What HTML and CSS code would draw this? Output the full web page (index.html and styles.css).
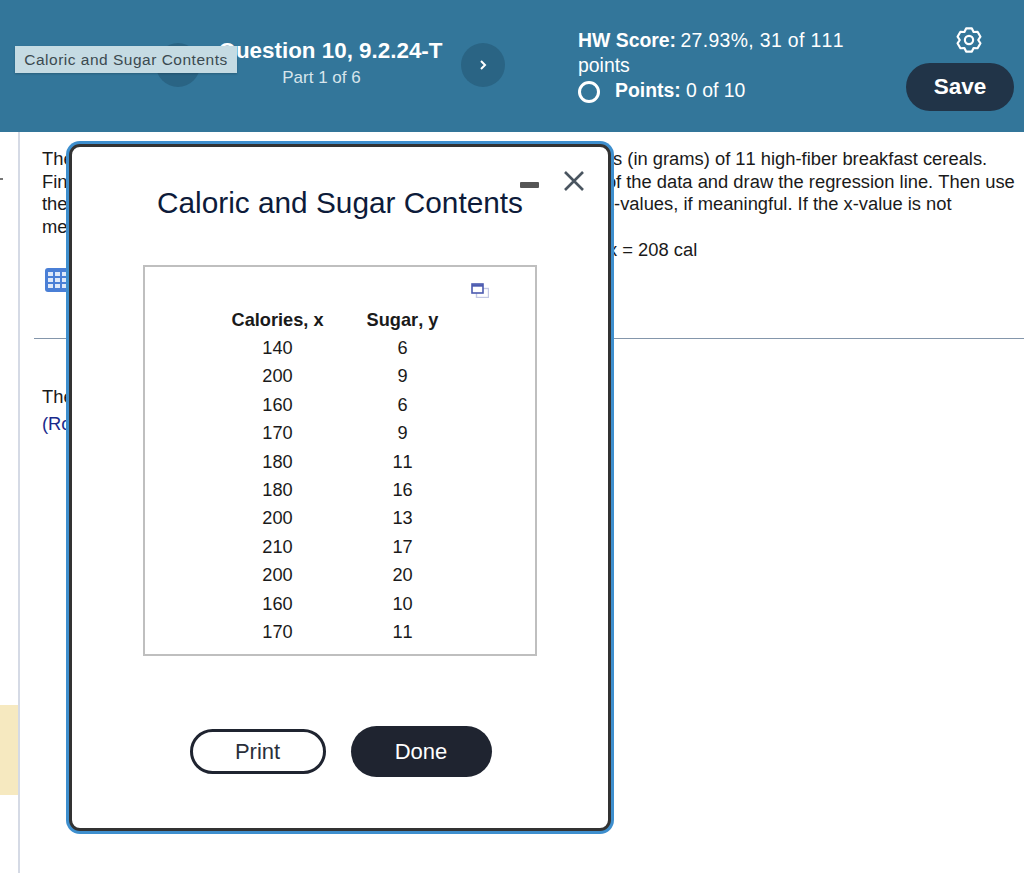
FILE: index.html
```html
<!DOCTYPE html>
<html lang="en">
<head>
    <meta charset="UTF-8">
    <meta name="viewport" content="width=device-width, initial-scale=1.0">
    <title>Question 10, 9.2.24-T</title>
    <link rel="stylesheet" href="styles.css">
</head>
<body>
    <header class="top-bar">
        <div class="nav-group">
            <button class="nav-btn nav-prev"></button>
            <div class="question-title">
                <h1>Question 10, 9.2.24-T</h1>
                <div class="part">Part 1 of 6</div>
            </div>
            <button class="nav-btn">
                <svg width="10" height="14" viewBox="0 0 10 14"><path d="M3 3l4 4-4 4" fill="none" stroke="#fff" stroke-width="2"/></svg>
            </button>
        </div>
        <div class="score">
            <div class="score-line"><b>HW Score:</b> <span class="score-value">27.93%, 31 of 111</span> points</div>
            <div class="points-line">
                <span class="radio"></span>
                <span><b>Points:</b> 0 of 10</span>
            </div>
        </div>
        <div class="actions">
            <svg class="gear" width="26" height="26" viewBox="0 0 24 24" fill="none" stroke="#fff" stroke-width="2" stroke-linejoin="round">
                <path d="M9.34 1.33H14.66L16.25 4.64 19.91 4.36 22.57 8.97 20.5 12 22.57 15.03 19.91 19.64 16.25 19.36 14.66 22.67H9.34L7.75 19.36 4.09 19.64 1.43 15.03 3.5 12 1.43 8.97 4.09 4.36 7.75 4.64z"/>
                <circle cx="12" cy="12" r="3.8"/>
            </svg>
            <button class="save-btn">Save</button>
        </div>
    </header>
    <div class="tooltip">Caloric and Sugar Contents</div>

    <div class="page">
        <div class="rail">
            <span class="rail-dot"></span>
            <span class="rail-flag"></span>
        </div>
        <main class="content">
            <p class="intro">
                The data shows the caloric content (in calories), and the sugar contents (in grams) of 11 high-fiber breakfast cereals.<br>
                Find the equation of the regression line. Then construct a scatter plot of the data and draw the regression line. Then use<br>
                the regression equation to predict the value of y for each of the given x-values, if meaningful. If the x-value is not<br>
                meaningful to predict the value of y, explain why not.
            </p>
            <p class="given">x = 208 cal</p>
            <svg class="data-icon" width="24" height="24" viewBox="0 0 24 24">
                <rect width="24" height="24" rx="3" fill="#4a7fd6"/>
                <path d="M3 4h5v4H3zM10 4h5v4h-5zM17 4h5v4h-5zM3 10h5v4H3zM10 10h5v4h-5zM17 10h5v4h-5zM3 16h5v4H3zM10 16h5v4h-5zM17 16h5v4h-5z" fill="#dfe9f9"/>
            </svg>
            <hr class="divider">
            <p class="answer">The equation of the regression line is</p>
            <p class="hint">(Round to three decimal places as needed.)</p>
        </main>
    </div>

    <div class="modal">
        <div class="window-btns">
            <span class="minimize"></span>
            <svg width="22" height="22" viewBox="0 0 22 22"><path d="M2 2l18 18M20 2L2 20" stroke="#4a5560" stroke-width="2.6"/></svg>
        </div>
        <h2 class="modal-title">Caloric and Sugar Contents</h2>
        <div class="table-box">
            <svg class="copy-icon" width="18" height="15" viewBox="0 0 18 15" fill="none">
                <rect x="5.5" y="5.5" width="12" height="9" stroke="#c3c8e4" stroke-width="1.4"/>
                <rect x="1" y="1" width="11" height="9" fill="#fff" stroke="#4c5bb0" stroke-width="1.6"/>
                <path d="M1 2.5h11" stroke="#4c5bb0" stroke-width="2.4"/>
            </svg>
            <table>
                <thead>
                    <tr><th>Calories, x</th><th>Sugar, y</th></tr>
                </thead>
                <tbody>
                    <tr><td>140</td><td>6</td></tr>
                    <tr><td>200</td><td>9</td></tr>
                    <tr><td>160</td><td>6</td></tr>
                    <tr><td>170</td><td>9</td></tr>
                    <tr><td>180</td><td>11</td></tr>
                    <tr><td>180</td><td>16</td></tr>
                    <tr><td>200</td><td>13</td></tr>
                    <tr><td>210</td><td>17</td></tr>
                    <tr><td>200</td><td>20</td></tr>
                    <tr><td>160</td><td>10</td></tr>
                    <tr><td>170</td><td>11</td></tr>
                </tbody>
            </table>
        </div>
        <div class="modal-actions">
            <button class="print-btn">Print</button>
            <button class="done-btn">Done</button>
        </div>
    </div>
</body>
</html>
```

FILE: styles.css
```css
body {
    margin: 0;
    height: 873px;
    overflow: hidden;
    font-family: "Liberation Sans", Arial, sans-serif;
    font-kerning: none;
    color: #1a1a1a;
    background-color: white;
}
button {
    font-family: inherit;
    border: none;
    padding: 0;
}
.top-bar {
    display: flex;
    height: 132px;
    box-sizing: border-box;
    background-color: #33769a;
    color: white;
}
.nav-group {
    display: flex;
    align-items: center;
    gap: 18px;
    margin-left: 156px;
    width: 422px;
    height: 130px;
}
.nav-btn {
    display: flex;
    align-items: center;
    justify-content: center;
    flex: none;
    width: 44px;
    height: 44px;
    border-radius: 50%;
    background-color: #2a6484;
}
.question-title {
    width: 225px;
    margin-bottom: 4px;
    text-align: center;
}
.question-title h1 {
    margin: 0;
    font-size: 22.4px;
    line-height: 26px;
    white-space: nowrap;
}
.part {
    margin-top: 4px;
    padding-right: 18px;
    font-size: 17px;
    line-height: 20px;
    color: #d7e5ec;
}
.score {
    width: 290px;
    padding-top: 28px;
    font-size: 19.4px;
    line-height: 25px;
}
.score-line {
    width: 280px;
}
.score-value {
    margin-left: -1px;
    letter-spacing: 0.35px;
}
.points-line {
    display: flex;
    align-items: center;
    gap: 15px;
}
.radio {
    width: 16px;
    height: 16px;
    border: 3px solid white;
    border-radius: 50%;
    margin-top: 3px;
}
.actions {
    display: flex;
    flex-direction: column;
    align-items: center;
    margin-left: 38px;
    padding-top: 27px;
}
.gear {
    display: block;
    margin-left: 18px;
}
.save-btn {
    width: 108px;
    height: 48px;
    margin-top: 10px;
    border-radius: 24px;
    background-color: #213448;
    color: white;
    font-size: 22.5px;
    font-weight: bold;
}
.tooltip {
    position: absolute;
    left: 15px;
    top: 46px;
    width: 222px;
    height: 27px;
    box-sizing: border-box;
    background-color: #c5dbe3;
    color: #3b4a50;
    font-size: 15.5px;
    line-height: 27px;
    letter-spacing: 0.5px;
    text-align: center;
    box-shadow: 0 1px 2px rgba(0,0,0,0.2);
}
.page {
    display: flex;
    height: 741px;
}
.rail {
    position: relative;
    width: 18px;
    flex: none;
    border-right: 2px solid #d5dae5;
}
.rail-dot {
    position: absolute;
    left: 0;
    top: 46px;
    width: 3px;
    height: 2px;
    background-color: #777;
}
.rail-flag {
    position: absolute;
    left: 0;
    top: 573px;
    width: 18px;
    height: 90px;
    background-color: #f6e9c0;
}
.content {
    flex: 1;
    padding-top: 16px;
    font-size: 18.35px;
    line-height: 22.7px;
    white-space: nowrap;
    overflow: hidden;
}
.intro {
    margin: 0 0 0 22px;
}
.given {
    margin: 0 0 0 588px;
}
.data-icon {
    display: block;
    margin: 6px 0 0 25px;
}
.divider {
    height: 1px;
    margin: 46px 0 0 14px;
    border: none;
    background-color: #8496ab;
}
.answer {
    margin: 47px 0 0 22px;
}
.hint {
    margin: 5px 0 0 22px;
    color: #1a2a8c;
}
.modal {
    position: absolute;
    left: 69px;
    top: 144px;
    width: 542px;
    height: 687px;
    box-sizing: border-box;
    padding-top: 38px;
    background-color: white;
    border: 3px solid #333;
    border-radius: 11px;
    box-shadow: 0 0 0 3px #3e8fce;
}
.window-btns {
    position: absolute;
    right: 23px;
    top: 23px;
    display: flex;
    align-items: center;
    gap: 24px;
}
.minimize {
    width: 19px;
    height: 6px;
    margin-top: 8px;
    border-radius: 1px;
    background-color: #555;
}
.modal-title {
    margin: 0;
    font-size: 29.8px;
    font-weight: normal;
    line-height: 36px;
    text-align: center;
    color: #0d1b3a;
}
.table-box {
    position: relative;
    width: 394px;
    height: 391px;
    box-sizing: border-box;
    margin: 44px 0 0 71px;
    padding-top: 39px;
    border: 2px solid #bfbfbf;
}
.copy-icon {
    position: absolute;
    right: 46px;
    top: 16px;
}
table {
    margin: 0 auto;
    border-collapse: collapse;
    font-size: 18.2px;
    color: #1a1a1a;
}
th, td {
    width: 125px;
    height: 28.4px;
    padding: 0;
    text-align: center;
}
.modal-actions {
    display: flex;
    align-items: center;
    justify-content: center;
    gap: 25px;
    margin-top: 70px;
    padding-left: 1px;
}
.print-btn {
    width: 136px;
    height: 45px;
    box-sizing: border-box;
    border: 3px solid #1f2430;
    border-radius: 23px;
    background-color: white;
    color: #2a2f3a;
    font-size: 22px;
}
.done-btn {
    width: 141px;
    height: 51px;
    border-radius: 26px;
    background-color: #1f2430;
    color: white;
    font-size: 22px;
}
```
